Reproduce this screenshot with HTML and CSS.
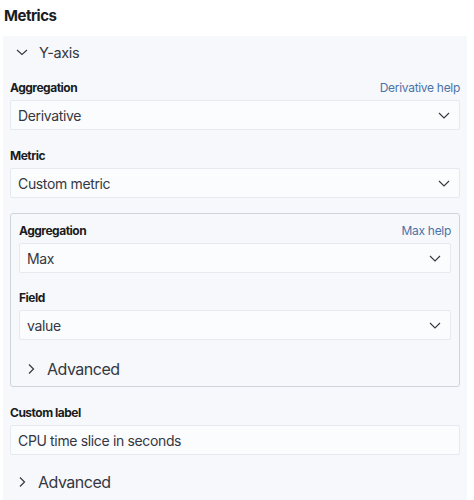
FILE: index.html
```html
<!DOCTYPE html>
<html>
<head>
<meta charset="utf-8">
<link rel="stylesheet" href="styles.css">
</head>
<body>
<h2 class="title">Metrics</h2>
<div class="panel">
  <div class="acc-head">
    <svg class="chev" width="12" height="12" viewBox="0 0 12 12"><path d="M1 4 L6 8.5 L11 4" fill="none" stroke="#343741" stroke-width="1.1"/></svg>
    <span class="acc-title">Y-axis</span>
  </div>
  <div class="body">
    <div class="row">
      <div class="label-row"><span class="label">Aggregation</span><span class="link">Derivative help</span></div>
      <div class="select"><span>Derivative</span><svg width="14" height="14" viewBox="0 0 14 14"><path d="M2 5 L7 10 L12 5" fill="none" stroke="#343741" stroke-width="1.1"/></svg></div>
    </div>
    <div class="row">
      <div class="label-row"><span class="label">Metric</span></div>
      <div class="select"><span>Custom metric</span><svg width="14" height="14" viewBox="0 0 14 14"><path d="M2 5 L7 10 L12 5" fill="none" stroke="#343741" stroke-width="1.1"/></svg></div>
    </div>
    <div class="nested">
      <div class="row">
        <div class="label-row"><span class="label">Aggregation</span><span class="link">Max help</span></div>
        <div class="select"><span>Max</span><svg width="14" height="14" viewBox="0 0 14 14"><path d="M2 5 L7 10 L12 5" fill="none" stroke="#343741" stroke-width="1.1"/></svg></div>
      </div>
      <div class="row">
        <div class="label-row"><span class="label">Field</span></div>
        <div class="select"><span>value</span><svg width="14" height="14" viewBox="0 0 14 14"><path d="M2 5 L7 10 L12 5" fill="none" stroke="#343741" stroke-width="1.1"/></svg></div>
      </div>
      <div class="adv adv-inner">
        <svg class="chev" width="12" height="12" viewBox="0 0 12 12"><path d="M4 1.5 L8.5 6 L4 10.5" fill="none" stroke="#343741" stroke-width="1.2"/></svg>
        <span>Advanced</span>
      </div>
    </div>
    <div class="row">
      <div class="label-row"><span class="label">Custom label</span></div>
      <div class="select input"><span>CPU time slice in seconds</span></div>
    </div>
    <div class="adv adv-outer">
      <svg class="chev" width="12" height="12" viewBox="0 0 12 12"><path d="M4 1.5 L8.5 6 L4 10.5" fill="none" stroke="#343741" stroke-width="1.2"/></svg>
      <span>Advanced</span>
    </div>
  </div>
</div>
</body>
</html>
```
FILE: styles.css
```css
html, body {
  margin: 0;
  padding: 0;
  background: #ffffff;
  font-family: Inter, "Liberation Sans", sans-serif;
  color: #343741;
}
body {
  width: 474px;
  height: 500px;
  overflow: hidden;
}
.title {
  margin: 0;
  padding: 6px 0 0 4px;
  height: 36px;
  box-sizing: border-box;
  font-size: 15px;
  font-weight: 700;
  line-height: 20px;
  letter-spacing: -0.5px;
  color: #1a1c21;
}
.panel {
  margin-left: 3px;
  width: 464px;
  background: #f7f8fb;
  height: 464px;
}
.acc-head {
  height: 32px;
  display: flex;
  align-items: center;
  padding-left: 13px;
  gap: 11px;
}
.acc-title {
  font-size: 14.5px;
  letter-spacing: -0.4px;
}
.chev {
  flex: none;
}
.body {
  padding: 9px 7px 0 7px;
  display: flex;
  flex-direction: column;
}
.row {
  display: flex;
  flex-direction: column;
  margin-bottom: 15px;
}
.label-row {
  height: 20px;
  display: flex;
  align-items: center;
  justify-content: space-between;
  margin-bottom: 3px;
}
.label {
  font-size: 12px;
  font-weight: 700;
  letter-spacing: -0.5px;
  color: #1a1c21;
}
.link {
  font-size: 12px;
  letter-spacing: -0.3px;
  color: #4a72a8;
}
.select {
  height: 30px;
  box-sizing: border-box;
  background: #fbfcfd;
  border: 1px solid #e6e9ef;
  border-radius: 2px;
  display: flex;
  align-items: center;
  justify-content: space-between;
  padding: 0 8px 0 7px;
  font-size: 14px;
  letter-spacing: -0.35px;
}
.select svg {
  flex: none;
}
.nested {
  border: 1px solid #cfd4dc;
  border-radius: 3px;
  padding: 6px 8px 0 8px;
  margin-bottom: 15px;
  height: 174px;
  box-sizing: border-box;
}
.nested .row {
  margin-bottom: 14px;
}
.adv {
  display: flex;
  align-items: center;
  font-size: 16px;
  letter-spacing: -0.5px;
}
.adv-inner {
  height: 24px;
  padding-top: 3px;
  padding-left: 6px;
  gap: 10px;
}
.adv-outer {
  height: 24px;
  padding-left: 6px;
  gap: 10px;
}
```
